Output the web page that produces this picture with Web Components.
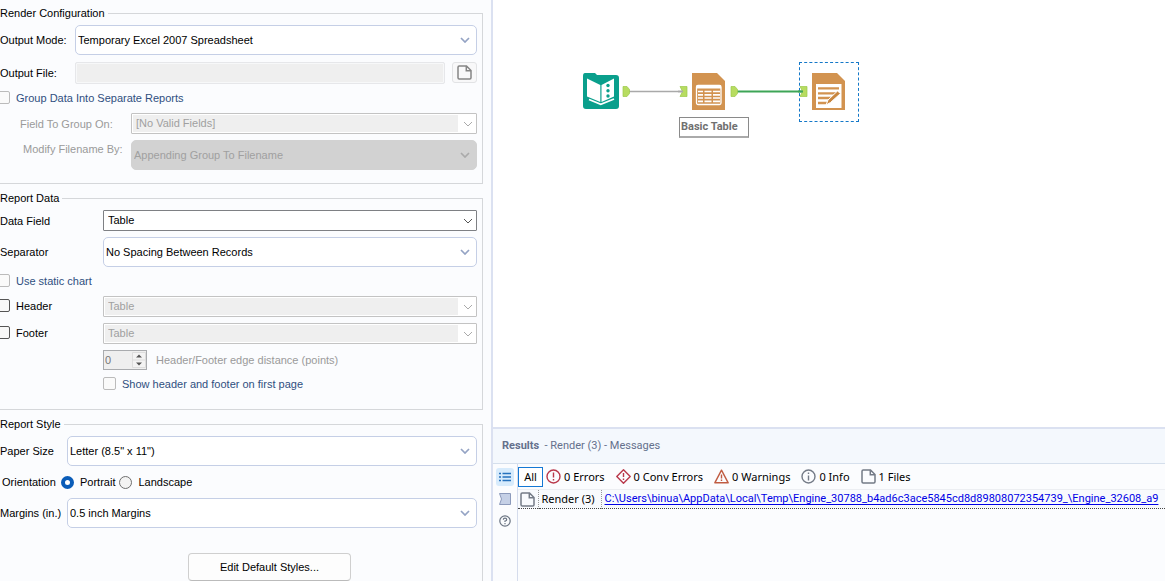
<!DOCTYPE html>
<html lang="en">
<head>
<meta charset="utf-8">
<title>Render tool configuration</title>
<style>
  html, body { height: 100%; }
  body { margin: 0; overflow: hidden; background: #fbfcfe; }
</style>
</head>
<body>
<designer-app></designer-app>

<template id="t-app">
  <style>
    :host { display: grid; grid-template-columns: 493fr 672fr; height: 100vh; overflow: hidden;
      font: 11px/14px "Liberation Sans", Arial, sans-serif; color: #000; }
    .config { box-sizing: border-box; min-width: 0; overflow: hidden; border-right: 2px solid #dbe1f1;
      background: #fbfcfe; padding-top: 6px; display: flex; flex-direction: column; gap: 7px; }
    .work { min-width: 0; display: flex; flex-direction: column; }
    workflow-canvas { flex: 1; }
    message-panel { flex: 0 0 auto; }
  </style>
  <div class="config">
    <option-group caption="Render Configuration" style="--label: 75px; --end: 13px">
      <pick-row label="Output Mode:" value="Temporary Excel 2007 Spreadsheet"></pick-row>
      <file-row></file-row>
      <tick-row label="Group Data Into Separate Reports"></tick-row>
      <pick-row style="--label: 131px; --indent: 20px" kind="classic" off label="Field To Group On:" value="[No Valid Fields]"></pick-row>
      <pick-row style="--label: 131px; --indent: 23px" off label="Modify Filename By:" value="Appending Group To Filename" raised></pick-row>
    </option-group>
    <option-group caption="Report Data" style="--label: 103px; --end: 16px">
      <pick-row kind="classic" label="Data Field" value="Table"></pick-row>
      <pick-row label="Separator" value="No Spacing Between Records"></pick-row>
      <tick-row label="Use static chart"></tick-row>
      <pick-row kind="classic" off tick label="Header" value="Table"></pick-row>
      <pick-row kind="classic" off tick label="Footer" value="Table"></pick-row>
      <distance-row></distance-row>
      <tick-row style="--shift: 103px" label="Show header and footer on first page"></tick-row>
    </option-group>
    <option-group caption="Report Style" style="--label: 67px; --end: 16px">
      <pick-row label="Paper Size" value='Letter (8.5" x 11")'></pick-row>
      <orientation-row></orientation-row>
      <pick-row label="Margins (in.)" value="0.5 inch Margins"></pick-row>
      <styles-button>Edit Default Styles...</styles-button>
    </option-group>
  </div>
  <div class="work">
    <workflow-canvas></workflow-canvas>
    <message-panel></message-panel>
  </div>
</template>

<template id="t-group">
  <style>
    :host { display: block; }
    fieldset { margin: 0; min-width: 0; margin-right: 8px; border: 1px solid #d5d7da; border-left: 0;
      padding: 5px 5px var(--end) 0; }
    legend { padding: 0 3px 0 0; height: 14px; }
    .rows { display: flex; flex-direction: column; gap: 6px; }
  </style>
  <fieldset><legend></legend><div class="rows"><slot></slot></div></fieldset>
</template>

<template id="t-pick">
  <style>
    :host { display: grid; grid-template-columns: var(--label) minmax(0, 1fr); align-items: center; }
    .name { display: flex; align-items: center; padding-left: var(--indent, 0); }
    .box { display: grid; grid-template-columns: minmax(0, 1fr) 22px; align-items: center; }
    select { grid-area: 1 / 1 / 2 / 3; width: 100%; box-sizing: border-box; height: 30px; margin: 0; appearance: none;
      font: inherit; color: #000; background: #fff; border: 1px solid #c5cfe6; border-radius: 5px; padding: 0 24px 0 2px; opacity: 1; }
    svg { grid-area: 1 / 2; pointer-events: none; fill: none; stroke: #94a3c4; stroke-width: 1.700; width: 10px; height: 6px; margin-left: 5px; }
    :host([kind=classic]) select { height: 21px; border: 1px solid #7e8084; border-radius: 1px; padding-left: 4px; padding-bottom: 2px; }
    :host([kind=classic]) svg { stroke: #555; stroke-width: 1; margin-left: 8px; }
    :host([off]) select { color: #a0a0a0; background: #d2d2d2; border-color: #d2d2d2; }
    :host([off]) svg { stroke: #aaa; }
    :host([off]) .name { color: #9a9a9a; }
    :host([off][kind=classic]) select { border-color: #c3c3c3;
      background: linear-gradient(#efefef, #efefef) 1px 1px / calc(100% - 19px) calc(100% - 2px) no-repeat #fff; background-origin: padding-box; }
    :host([off][tick]) .name { color: #000; }
    :host([off][tick]) .name { padding-bottom: 2px; }
    :host([raised]) .name { align-self: start; padding-top: 2px; }
    input { appearance: none; box-sizing: border-box; width: 13px; height: 13px; margin: 0 6px 0 -3px; border: 1px solid #555; border-radius: 2px; background: #f8f8f8; }
  </style>
  <div class="name"></div>
  <div class="box"><select id="pick"><option></option></select>
    <svg viewBox="0 0 10 6"><path d="M1 1l4 4 4-4"/></svg></div>
</template>

<template id="t-file">
  <style>
    :host { display: grid; grid-template-columns: var(--label) minmax(0, 1fr) 25px; align-items: center; height: 23px; }
    input { box-sizing: border-box; width: 100%; height: 22px; border: 1px solid #e6e7ea; background: #efefef; border-radius: 2px;
      margin: 0; box-shadow: inset 0 0 0 1px #f7f8f9; }
    .slot { padding-right: 7px; display: flex; }
    button { box-sizing: border-box; width: 25px; height: 21px; padding: 0; border: 1px solid #e2e3e5; border-radius: 3px; background: #f8f8f9; display: grid; place-items: center; }
  </style>
  <label for="file">Output File:</label>
  <div class="slot"><input id="file" type="text" disabled></div>
  <button type="button" aria-label="Browse" disabled>
    <svg width="15" height="15" viewBox="0 0 15 15" fill="none" stroke="#858585" stroke-width="1.500"><path d="M9.500 1H2.200Q1 1 1 2.200v10.600Q1 14 2.200 14h10.600q1.200 0 1.200-1.200V5.500zM9.300 1v4.700H14"/></svg>
  </button>
</template>

<template id="t-tick">
  <style>
    :host { display: flex; align-items: center; height: 15px; padding-bottom: 2px; padding-left: var(--shift, 0); color: #2f4f80; }
    input { appearance: none; box-sizing: border-box; width: 13px; height: 13px; margin: 0 6px 0 0; border: 1px solid #bbb; border-radius: 2px; background: #fafafa; }
    :host(:not([style])) input { margin-left: -3px; }
  </style>
  <input type="checkbox" id="tick"><label for="tick"></label>
</template>

<template id="t-distance">
  <style>
    :host { display: flex; align-items: center; padding-left: var(--label); height: 20px; color: #9a9a9a; }
    .spin { box-sizing: border-box; width: 44px; height: 20px; border: 1px solid #a9abae; background: #efefef; display: flex; }
    input { appearance: textfield; font: inherit; color: #777; width: 28px; box-sizing: border-box; border: 0; background: none; padding: 0 1px 1px; margin: 0; }
    input::-webkit-inner-spin-button { display: none; }
    svg { width: 14px; height: 18px; }
    label { padding-left: 9px; }
  </style>
  <div class="spin"><input id="d" type="number" value="0" disabled>
    <svg viewBox="0 0 14 18"><path d="M.5 1.500v15h13v-15zM.5 9h13" fill="#f3f3f3" stroke="#ddd"/><path d="M4 6.500l3-3 3 3zM4 11.500h6l-3 3z" fill="#555"/></svg></div>
  <label for="d">Header/Footer edge distance (points)</label>
</template>

<template id="t-orient">
  <style>
    :host { display: flex; align-items: center; height: 20px; }
    .title { box-sizing: border-box; width: 61px; padding-left: 2px; }
    input { appearance: none; box-sizing: border-box; width: 13px; height: 13px; border-radius: 50%; border: 1px solid #6f6f6f; background: #f3f3f3; margin: 0 6px 0 0; }
    input:checked { border: 4px solid #0a5cb8; background: #fff; }
    label { margin-right: 4px; }
  </style>
  <div class="title">Orientation</div>
  <input type="radio" name="o" id="p" checked><label for="p">Portrait</label>
  <input type="radio" name="o" id="l"><label for="l">Landscape</label>
</template>

<template id="t-styles">
  <style>
    :host { display: block; padding: 19px 0 0 188px; }
    button { display: block; box-sizing: border-box; width: 163px; height: 28px; font: inherit; color: #000; background: #fdfdfd; border: 1px solid #cfcfcf; border-bottom-color: #bbb; border-radius: 4px; padding: 0; }
  </style>
  <button type="button"><slot></slot></button>
</template>

<template id="t-canvas">
  <style>
    :host { display: block; position: relative; min-height: 0; overflow: hidden; background: #fff; }
    .wires { position: absolute; left: 0; top: 0; }
    flow-node { position: absolute; top: 62px; }
    .book { left: 78px; }
    .table { left: 186px; }
    .render { left: 306px; }
  </style>
  <flow-node class="book"><svg width="38" height="38" viewBox="0 1 38 38">
    <path d="M3 1h10l2 2h19q3 0 3 3v28q0 3-3 3H4q-3 0-3-3V4q0-3 2-3z" fill="#0a9f8c"/>
    <path d="M5 6.500L18.300 13v17L5 24.500zM19.500 13L32 6.500v18L19.500 30z" fill="#fff"/>
    <path d="M7 27.500l11.800 4.800L32 27" fill="none" stroke="#fff" stroke-width="1.800"/>
    <g fill="#0a9f8c"><circle cx="26" cy="13.500" r="1.700"/><circle cx="26" cy="18.800" r="1.700"/><circle cx="26" cy="24" r="1.700"/></g></svg></flow-node>
  <flow-node class="table"><svg width="34" height="38" viewBox="0 1 34 38">
    <path d="M0 1h25l8 8v29H0z" fill="#d29350"/>
    <rect x="4.500" y="13.500" width="24.500" height="19" rx="1.500" fill="none" stroke="#fff" stroke-width="1.300"/>
    <path d="M4.500 15h24.500" stroke="#fff" stroke-width="3"/>
    <path d="M6 19.500h5M12.500 19.500h7M21 19.500h7M6 22.800h5M12.500 22.800h7M21 22.800h7M6 26h5M12.500 26h7M21 26h7M6 29.300h5M12.500 29.300h7M21 29.300h7" stroke="#fff" stroke-width="1.700"/></svg>
    <span slot="caption">Basic Table</span></flow-node>
  <flow-node class="render" selected><svg width="34" height="38" viewBox="0 1 34 38">
    <path d="M0 1h25l8 8v29H0z" fill="#d29350"/>
    <path d="M4 12h25.500v24H4z" fill="#fff"/>
    <path d="M6 16.300h21M6 21.300h21M6 26h13M6 31h9" stroke="#d29350" stroke-width="2.300"/>
    <path d="M14 33l2-5 9.500-9 3 2.500-10 9z" fill="#c9873f" stroke="#fff"/></svg></flow-node>
  <svg class="wires" width="400" height="140" viewBox="0 0 400 140">
    <path d="M136 91.500h53" stroke="#a9a9a9" stroke-width="1.700"/>
    <path d="M244 91.500h66" stroke="#3ea557" stroke-width="2"/>
    <g fill="#b7dc60" stroke="#9cc94a" stroke-width=".7">
      <path d="M130 86.500h4l2.500 3v4l-2.500 3h-4z"/><path d="M238 86.500h4l2.500 3v4l-2.500 3h-4z"/>
      <path d="M187 86.500h7v10h-7l2.500-5z"/><path d="M307 86.500h7v10h-7l2.500-5z"/></g>
    <path d="M185 91.500h5" stroke="#a9a9a9" stroke-width="1.700"/><path d="M305 91.500h5" stroke="#3ea557" stroke-width="2"/>
  </svg>
</template>

<template id="t-node">
  <style>
    :host { display: block; width: 60px; }
    .frame { box-sizing: border-box; width: 60px; height: 60px; display: grid; place-items: center; border: 1px solid transparent; }
    :host([selected]) .frame { border: 1px dashed #1478c8; }
    .cap { display: none; }
    :host(.table) .cap { display: block; box-sizing: border-box; width: 70px; height: 21px; margin: -5px 0 0 0; padding: 0 1px;
      border: 1px solid #8a8a8a; border-bottom-width: 2px; border-bottom-color: #aaa; background: #fff; color: #707070;
      font: bold 11px/18px Roboto, sans-serif; white-space: nowrap; position: relative; }
  </style>
  <div class="frame"><slot></slot></div><div class="cap"><slot name="caption"></slot></div>
</template>

<template id="t-messages">
  <style>
    :host { display: grid; grid-template: 35px 117px / 25px minmax(0, 1fr); border-top: 2px solid #dbe1f1; background: #fbfcfe; font: 11px/16px "Noto Sans", sans-serif; }
    header { grid-column: 1 / 3; box-sizing: border-box; background: #f4f8fd; border-bottom: 1px solid #d5dfec; padding: 9px; color: #64708c; font: 11px/16px Roboto, sans-serif; }
    nav { border-right: 1px solid #d5dcec; padding: 4px 3px; display: flex; flex-direction: column; align-items: flex-start; gap: 4px; }
    nav button { width: 18px; height: 18px; border: 0; border-radius: 3px; background: none; padding: 0; display: grid; place-items: center; }
    nav button.on { background: #d7ebfc; }
    .bar { display: flex; align-items: center; height: 26px; box-sizing: border-box; border-bottom: 1px solid #eceef2; gap: 11px; }
    .bar button { font: inherit; color: #000; border: 0; background: none; padding: 0; display: flex; align-items: center; gap: 3px; white-space: nowrap; }
    .bar .all { box-sizing: border-box; width: 25px; height: 20px; border: 1px solid #1478d4; justify-content: center; background: #fff; margin-right: -8px; }
    table { width: 100%; table-layout: fixed; border-collapse: collapse; border-bottom: 1px dotted #444; background: #f8fafd; }
    td { height: 18px; padding: 0 3px; white-space: nowrap; border-right: 1px dotted #999; line-height: 16px; }
    td:last-child { border-right: 0; padding-right: 0; font-family: Roboto, sans-serif; }
    td svg { display: block; }
    a { color: #0000e6; text-underline-offset: 2px; text-decoration-skip-ink: none; }
  </style>
  <header><b>Results</b>&nbsp; - Render (3) - Messages</header>
  <nav>
    <button class="on" type="button" aria-label="Messages"><svg width="12" height="10" viewBox="0 0 12 10" stroke="#2672bd" stroke-width="1.300"><path d="M0 1.500h2M0 5h2M0 8.500h2M3.500 1.500H12M3.500 5H12M3.500 8.500H12"/></svg></button>
    <button type="button" aria-label="Data"><svg width="12" height="12" viewBox="0 0 12 12"><path d="M.5.500h11v11H.5l2-5.500z" fill="#c5d0e6" stroke="#8c9abb"/></svg></button>
    <button type="button" aria-label="Help"><svg width="12" height="12" viewBox="0 0 12 12" fill="none" stroke="#6a7482" stroke-width="1.200"><circle cx="6" cy="6" r="5.200"/><path d="M4.300 4.800q0-1.600 1.700-1.600t1.700 1.500Q7.700 5.800 6 6v1"/><path d="M6 8v1.200"/></svg></button>
  </nav>
  <div>
    <div class="bar">
      <button class="all" type="button">All</button>
      <button type="button"><svg width="15" height="15" viewBox="0 0 15 15" fill="none" stroke="#b9384b" stroke-width="1.400"><circle cx="7.500" cy="7.500" r="6.500"/><path d="M7.500 3.500v5M7.500 10v1.500"/></svg>0 Errors</button>
      <button type="button"><svg width="15" height="15" viewBox="0 0 15 15" fill="none" stroke="#b9384b" stroke-width="1.400" stroke-linejoin="round"><path d="M7.500.800l6.700 6.700-6.700 6.700L.8 7.500z"/><path d="M7.500 4v4M7.500 9.500V11"/></svg>0 Conv Errors</button>
      <button type="button"><svg width="15" height="15" viewBox="0 0 15 15" fill="none" stroke="#c05c42" stroke-width="1.400" stroke-linejoin="round"><path d="M7.500 1.200l6.700 12.600H.8z"/><path d="M7.500 5.500v4M7.500 10.500V12"/></svg>0 Warnings</button>
      <button type="button"><svg width="15" height="15" viewBox="0 0 15 15" fill="none" stroke="#747b87" stroke-width="1.400"><circle cx="7.500" cy="7.500" r="6.500"/><path d="M7.500 6.500v5M7.500 3.500V5"/></svg>0 Info</button>
      <button type="button"><svg width="15" height="15" viewBox="0 0 15 15" fill="none" stroke="#747b87" stroke-width="1.500"><path d="M9.500 1H2.200Q1 1 1 2.200v10.600Q1 14 2.200 14h10.600q1.200 0 1.200-1.200V5.500zM9.300 1v4.700H14"/></svg>1 Files</button>
    </div>
    <table>
      <colgroup><col style="width: 20px"><col style="width: 63px"><col></colgroup>
      <tr>
        <td style="padding-left: 2px"><svg width="15" height="15" viewBox="0 0 15 15" fill="none" stroke="#747b87" stroke-width="1.500"><path d="M9.500 1H2.200Q1 1 1 2.200v10.600Q1 14 2.200 14h10.600q1.200 0 1.200-1.200V5.500zM9.300 1v4.700H14"/></svg></td>
        <td>Render (3)</td>
        <td><a href="#">C:\Users\binua\AppData\Local\Temp\Engine_30788_b4ad6c3ace5845cd8d89808072354739_\Engine_32608_a9</a></td>
      </tr>
    </table>
  </div>
</template>

<script>
  const define = (name, template, setup) => customElements.define(name, class extends HTMLElement {
    constructor() {
      super();
      this.attachShadow({ mode: "open" }).append(document.getElementById(template).content.cloneNode(true));
    }
    connectedCallback() { if (setup) setup(this, this.shadowRoot); }
  });

  define("option-group", "t-group", (el, root) => {
    root.querySelector("legend").textContent = el.getAttribute("caption");
  });
  define("pick-row", "t-pick", (el, root) => {
    const name = root.querySelector(".name");
    const label = document.createElement("label");
    const pick = root.querySelector("select");
    label.textContent = el.getAttribute("label");
    label.htmlFor = "pick";
    name.replaceChildren(label);
    if (el.hasAttribute("tick")) {
      const tick = document.createElement("input");
      tick.type = "checkbox";
      tick.id = "tick";
      label.htmlFor = "tick";
      pick.setAttribute("aria-label", label.textContent + " field");
      name.prepend(tick);
    }
    pick.options[0].textContent = el.getAttribute("value");
    pick.disabled = el.hasAttribute("off");
  });
  define("file-row", "t-file");
  define("tick-row", "t-tick", (el, root) => {
    root.querySelector("label").textContent = el.getAttribute("label");
  });
  define("distance-row", "t-distance");
  define("orientation-row", "t-orient");
  define("styles-button", "t-styles");
  define("flow-node", "t-node");
  define("workflow-canvas", "t-canvas");
  define("message-panel", "t-messages");
  define("designer-app", "t-app");
</script>
</body>
</html>
